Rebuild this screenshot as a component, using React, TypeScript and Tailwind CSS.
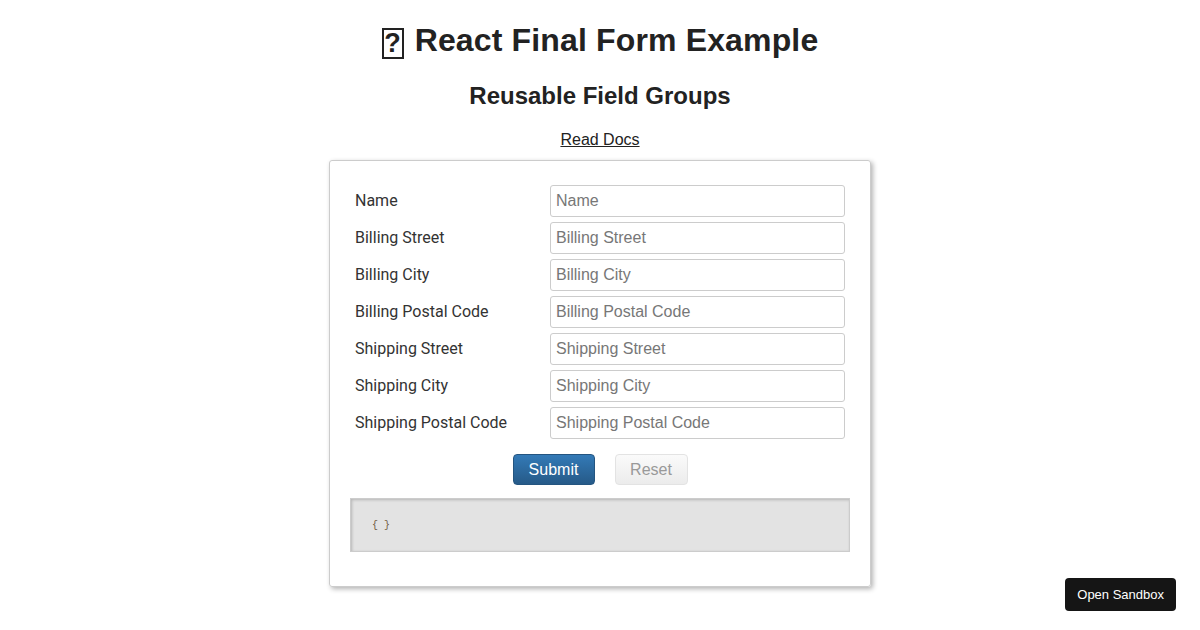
import React from "react";

const fields = [
  "Name",
  "Billing Street",
  "Billing City",
  "Billing Postal Code",
  "Shipping Street",
  "Shipping City",
  "Shipping Postal Code",
];

export default function App() {
  return (
    <div
      className="min-h-[630px] w-full bg-white text-[#222] relative"
      style={{ fontFamily: '"Liberation Sans", Arial, sans-serif' }}
    >
      <h1 className="text-center text-[32px] font-bold leading-[37px] pt-[22px] tracking-[0.15px]">
        <span className="inline-flex items-center justify-center align-[-1px] w-[22px] h-[31px] border-2 border-[#222] text-[27px] leading-none mr-[11px]">
          ?
        </span>
        React Final Form Example
      </h1>
      <h2 className="text-center text-[24px] font-bold leading-[28px] mt-[23px]">
        Reusable Field Groups
      </h2>
      <div className="text-center mt-[21px] leading-[18px]">
        <a href="#" className="text-[16px] text-[#222] underline">
          Read Docs
        </a>
      </div>
      <form className="w-[542px] mx-auto mt-[11px] border border-[#ccc] rounded-[3px] p-[20px] shadow-[2px_2px_5px_rgba(0,0,0,0.3)]">
        <div className="flex flex-col gap-[5px] px-[5px] pt-[4px]">
          {fields.map((f) => (
            <div key={f} className="flex flex-row items-center h-[32px]">
              <label
                className="w-[180px] text-[16px] text-[#333] leading-[32px]"
                style={{ fontFamily: 'Roboto, "Liberation Sans", sans-serif' }}
              >
                {f}
              </label>
              <input
                placeholder={f}
                className="flex-1 ml-[15px] h-[32px] px-[5px] text-[16px] border border-[#ccc] rounded-[3px] placeholder:text-[#777] outline-none"
              />
            </div>
          ))}
        </div>
        <div className="flex flex-row justify-center mt-[15px] gap-[20px]">
          <button
            type="button"
            className="h-[31px] w-[82px] text-[16px] text-white rounded-[4px] border border-[#245580] bg-gradient-to-b from-[#337ab7] to-[#265a88]"
          >
            Submit
          </button>
          <button
            type="button"
            disabled
            className="h-[31px] w-[73px] text-[16px] text-[#999] rounded-[4px] border border-[#e3e3e3] bg-gradient-to-b from-[#fafafa] to-[#ececec]"
          >
            Reset
          </button>
        </div>
        <pre
          className="mt-[13px] mb-[14px] h-[54px] border border-[#ccc] bg-[#e3e3e3] shadow-[inset_1px_1px_3px_rgba(0,0,0,0.2)] px-[21px] pt-[21px] pb-[19px] text-[10px] text-[#6f5a3f] leading-[12px]"
          style={{ fontFamily: '"Liberation Mono", monospace' }}
        >
          {"{ }"}
        </pre>
      </form>
      <div className="absolute right-[24px] top-[578px] h-[33px] px-[12px] flex items-center rounded-[4px] bg-[#151515] text-white text-[13px]">
        Open Sandbox
      </div>
    </div>
  );
}
